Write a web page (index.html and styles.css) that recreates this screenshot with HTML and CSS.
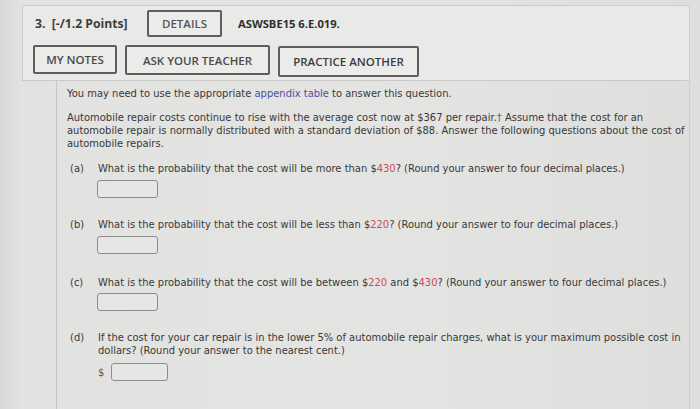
FILE: index.html
```html
<!DOCTYPE html>
<html>
<head>
<meta charset="utf-8">
<link rel="stylesheet" href="styles.css">
</head>
<body>
<div class="page">
  <div class="question">
    <div class="qhead">
      <div class="row1">
        <span class="qnum">3.&nbsp; [-/1.2 Points]</span>
        <span class="btn btn-details">DETAILS</span>
        <span class="qcode">ASWSBE15 6.E.019.</span>
      </div>
      <div class="row2">
        <span class="btn btn-notes">MY NOTES</span>
        <span class="btn btn-ask">ASK YOUR TEACHER</span>
        <span class="btn btn-practice">PRACTICE ANOTHER</span>
      </div>
    </div>
    <div class="qbody">
      <p class="intro">You may need to use the appropriate <span class="link">appendix table</span> to answer this question.</p>
      <p class="para">Automobile repair costs continue to rise with the average cost now at $367 per repair.<span class="dagger">†</span> Assume that the cost for an automobile repair is normally distributed with a standard deviation of $88. Answer the following questions about the cost of automobile repairs.</p>
      <div class="part part-a">
        <div class="ptext"><span class="plabel">(a)</span><span class="qtext">What is the probability that the cost will be more than $<span class="red">430</span>? (Round your answer to four decimal places.)</span></div>
        <div class="answer"><span class="box"></span></div>
      </div>
      <div class="part part-b">
        <div class="ptext"><span class="plabel">(b)</span><span class="qtext">What is the probability that the cost will be less than $<span class="red">220</span>? (Round your answer to four decimal places.)</span></div>
        <div class="answer"><span class="box"></span></div>
      </div>
      <div class="part part-c">
        <div class="ptext"><span class="plabel">(c)</span><span class="qtext">What is the probability that the cost will be between $<span class="red">220</span> and $<span class="red">430</span>? (Round your answer to four decimal places.)</span></div>
        <div class="answer"><span class="box"></span></div>
      </div>
      <div class="part part-d">
        <div class="ptext"><span class="plabel">(d)</span><span class="qtext">If the cost for your car repair is in the lower 5% of automobile repair charges, what is your maximum possible cost in dollars? (Round your answer to the nearest cent.)</span></div>
        <div class="answer"><span class="dollar">$</span><span class="box"></span></div>
      </div>
    </div>
  </div>
</div>
</body>
</html>
```

FILE: styles.css
```css
html, body {
  margin: 0;
  padding: 0;
}
body {
  width: 700px;
  height: 409px;
  overflow: hidden;
  background: linear-gradient(90deg, #d9d9d7 0px, #e2e2e0 22px, #e4e4e2 400px, #dededc 700px);
  font-family: "Open Sans", "Liberation Sans", sans-serif;
  color: #3a3a3a;
}
.page {
  padding: 5px 10px 0 22px;
}
.question {
  width: 668px;
}
.qhead {
  border: 1px solid #cdcdcb;
  border-bottom: 1px solid #c9c9c7;
  background: #e9e9e7;
  padding: 2px 0 4px 10px;
  height: 68px;
}
.row1 {
  display: flex;
  align-items: center;
  height: 30px;
}
.qnum {
  font-size: 12.2px;
  font-weight: 700;
  color: #3e3e3e;
  margin-left: 2px;
  width: 112px;
  white-space: nowrap;
}
.qcode {
  font-size: 11.2px;
  font-weight: 700;
  color: #2e2e2e;
  margin-left: 16px;
}
.btn {
  display: inline-flex;
  align-items: center;
  justify-content: center;
  box-sizing: border-box;
  border: 2px solid #5e5e5e;
  border-radius: 2px;
  background: #ebebea;
  font-size: 11.5px;
  font-weight: 600;
  color: #4a4a4a;
}
.btn-details {
  width: 75px;
  height: 27px;
  color: #555;
}
.row2 {
  display: flex;
  align-items: flex-start;
  gap: 8px;
  margin-top: 7px;
}
.btn-notes {
  width: 84px;
  height: 29px;
}
.btn-ask {
  width: 145px;
  height: 30px;
}
.btn-practice {
  width: 141px;
  height: 31px;
  margin-top: 1px;
  color: #3c3c3c;
}
.qbody {
  margin-left: 34px;
  border-left: 1px solid #c6c6c4;
  border-right: 1px solid #cfcfcd;
  border-bottom: 1px solid #cfcfcd;
  height: 324px;
  padding: 6px 0 0 10px;
  font-family: "DejaVu Sans", Verdana, sans-serif;
  font-size: 9.95px;
  line-height: 13px;
  color: #383838;
}
.intro {
  margin: 0;
}
.para {
  margin: 11px 0 0;
  width: 621px;
}
.link {
  color: #4b4fa8;
}
.dagger {
  color: #4b5fb0;
}
.red {
  color: #d2475c;
}
.ptext {
  display: flex;
}
.plabel {
  width: 28px;
  flex: none;
  padding-left: 3px;
}
.qtext {
  width: 590px;
}
.answer {
  display: flex;
  align-items: center;
  margin-top: 5px;
  padding-left: 30px;
}
.part-a {
  margin-top: 12px;
}
.part-b {
  margin-top: 20px;
}
.part-c {
  margin-top: 22px;
}
.part-c .answer {
  margin-top: 4px;
}
.part-d {
  margin-top: 20px;
}
.part-d .answer {
  margin-top: 6px;
}
.box {
  display: inline-block;
  box-sizing: border-box;
  width: 61px;
  height: 18px;
  border: 1.5px solid #8c8c8c;
  border-radius: 3px;
  background: #e6e6e4;
}
.dollar {
  width: 13px;
  margin-left: 1px;
  color: #555;
}
.answer .dollar + .box {
  width: 57px;
}
```
